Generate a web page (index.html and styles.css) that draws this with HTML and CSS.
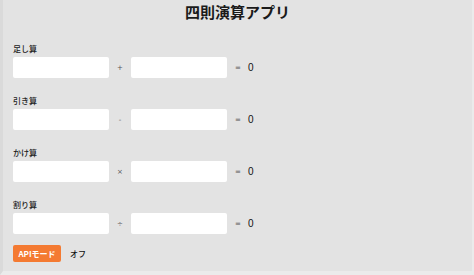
FILE: index.html
```html
<!DOCTYPE html>
<html lang="ja">
<head>
<meta charset="utf-8">
<link rel="stylesheet" href="styles.css">
</head>
<body>
<div class="app">
  <h1 class="title">四則演算アプリ</h1>
  <div class="content">
    <div class="op-block">
      <div class="label">足し算</div>
      <div class="row">
        <input class="num" type="text">
        <span class="op">+</span>
        <input class="num" type="text">
        <span class="eq">=</span>
        <span class="result">0</span>
      </div>
    </div>
    <div class="op-block">
      <div class="label">引き算</div>
      <div class="row">
        <input class="num" type="text">
        <span class="op">-</span>
        <input class="num" type="text">
        <span class="eq">=</span>
        <span class="result">0</span>
      </div>
    </div>
    <div class="op-block">
      <div class="label">かけ算</div>
      <div class="row">
        <input class="num" type="text">
        <span class="op">×</span>
        <input class="num" type="text">
        <span class="eq">=</span>
        <span class="result">0</span>
      </div>
    </div>
    <div class="op-block">
      <div class="label">割り算</div>
      <div class="row">
        <input class="num" type="text">
        <span class="op">÷</span>
        <input class="num" type="text">
        <span class="eq">=</span>
        <span class="result">0</span>
      </div>
    </div>
    <div class="api">
      <button class="api-btn">APIモード</button>
      <span class="api-state">オフ</span>
    </div>
  </div>
</div>
</body>
</html>
```
FILE: styles.css
```css
html, body {
  margin: 0;
  padding: 0;
  background: #e3e3e3;
}
body {
  font-family: "Noto Sans CJK JP", "Noto Sans", sans-serif;
  color: #222;
}
.app {
  box-sizing: border-box;
  width: 474px;
  height: 275px;
  padding-top: 1px;
  background: #e3e3e3;
  border-left: 3px solid #dadada;
  border-right: 2px solid #ebebeb;
  border-bottom: 4px solid #ebebeb;
}
.title {
  margin: 0 0 20px 0;
  font-size: 15px;
  line-height: 22px;
  font-weight: 700;
  text-align: center;
  color: #1a1a1a;
}
.content {
  padding-left: 10px;
}
.op-block {
  margin-bottom: 17px;
}
.label {
  font-size: 8px;
  line-height: 12px;
  margin-bottom: 2px;
  color: #222;
  font-weight: 500;
}
.row {
  display: flex;
  align-items: center;
  height: 21px;
}
.num {
  box-sizing: border-box;
  width: 96px;
  height: 21px;
  border: none;
  border-radius: 2px;
  background: #ffffff;
  padding: 0 4px;
  margin: 0;
  outline: none;
}
.op {
  width: 22px;
  text-align: center;
  font-family: "DejaVu Sans", sans-serif;
  font-size: 7px;
  color: #555;
}
.eq {
  margin-left: 8px;
  width: 5px;
  text-align: center;
  font-family: "DejaVu Sans", sans-serif;
  font-size: 7px;
  color: #555;
}
.result {
  margin-left: 8px;
  font-family: "Liberation Sans", sans-serif;
  font-size: 10px;
  color: #111;
}
.api {
  display: flex;
  align-items: center;
  margin-top: -6px;
}
.api-btn {
  box-sizing: border-box;
  width: 48px;
  height: 17px;
  padding: 0;
  border: none;
  border-radius: 2px;
  background: #f47a32;
  color: #fff;
  font-family: "Noto Sans CJK JP", "Noto Sans", sans-serif;
  font-size: 8px;
  font-weight: 700;
}
.api-state {
  margin-left: 9px;
  font-size: 8px;
  font-weight: 500;
  color: #111;
}
```
